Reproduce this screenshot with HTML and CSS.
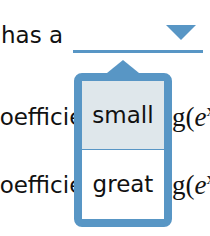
FILE: index.html
```html
<!DOCTYPE html>
<html>
<head>
    <link rel="stylesheet" href="styles.css">
</head>
<body>
    <div class="page">
        <div class="line first">
            <span class="words">has a</span>
            <span class="blank">
                <span class="arrow"></span>
            </span>
        </div>
        <div class="line">
            <span class="words cut">coefficient</span><span class="math">g(<i>e</i><sup>x</sup>)</span>
        </div>
        <div class="line">
            <span class="words cut">coefficient</span><span class="math">g(<i>e</i><sup>x</sup>)</span>
        </div>

        <!-- open dropdown menu -->
        <div class="menu">
            <div class="pointer"></div>
            <div class="menu-box">
                <div class="option selected">small</div>
                <div class="option">great</div>
            </div>
        </div>
    </div>
</body>
</html>
```

FILE: styles.css
```css
body {
    margin: 0;
    font-family: "DejaVu Sans", Verdana, sans-serif;
    font-size: 23px;
    color: #111;
    background: white;
    overflow: hidden;
}
.page {
    position: relative;
    width: 210px;
    height: 236px;
    overflow: hidden;
}
.line {
    height: 68px;
    line-height: 68px;
    white-space: nowrap;
}
.line.first {
    display: flex;
    align-items: flex-end;
    height: 53px;
    line-height: normal;
    margin-bottom: 30px;
}
.first .words {
    padding-left: 1px;
    padding-bottom: 5px;
    margin-right: 10px;
}
.blank {
    display: flex;
    justify-content: flex-end;
    align-items: flex-start;
    width: 130px;
    height: 25px;
    border-bottom: 3px solid #5896c5;
}
.arrow {
    width: 0;
    height: 0;
    margin-right: 7px;
    border-left: 15px solid transparent;
    border-right: 15px solid transparent;
    border-top: 15px solid #5896c5;
}
/* only the start of the word shows left of the menu */
.cut {
    display: inline-block;
    width: 87px;
    margin-left: -13px;
    overflow: hidden;
    vertical-align: top;
}
.math {
    margin-left: 98px;
    font-family: "Liberation Serif", "Times New Roman", serif;
    font-size: 27px;
}
.math sup {
    font-size: 17px;
    line-height: 0;
}
.menu {
    position: absolute;
    left: 74px;
    top: 60px;
    width: 98px;
}
.pointer {
    width: 0;
    height: 0;
    margin: 0 auto;
    border-left: 16px solid transparent;
    border-right: 16px solid transparent;
    border-bottom: 13px solid #5896c5;
}
.menu-box {
    border: 8px solid #5896c5;
    border-radius: 8px;
    background: white;
}
.option {
    height: 68px;
    line-height: 68px;
    text-align: center;
}
.option + .option {
    border-top: 1px solid #5896c5;
    height: 69px;
}
.selected {
    background: #dfe7eb;
}
```
